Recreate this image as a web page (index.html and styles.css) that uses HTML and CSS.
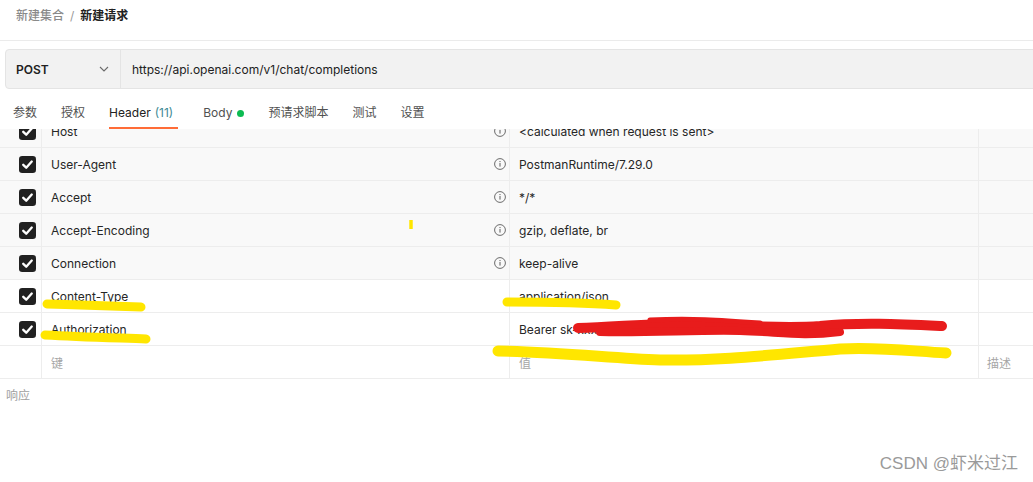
FILE: index.html
```html
<!DOCTYPE html>
<html lang="zh">
<head>
<meta charset="utf-8">
<title>新建请求</title>
<link rel="stylesheet" href="styles.css">
</head>
<body>
<div class="page">
  <header class="crumbs">
    <span class="crumb-parent">新建集合</span>
    <span class="crumb-sep">/</span>
    <span class="crumb-current">新建请求</span>
  </header>

  <div class="reqbar">
    <div class="method">
      <span class="method-name">POST</span>
      <svg class="chev" width="10" height="6" viewBox="0 0 10 6"><path d="M1 1 L5 5 L9 1" fill="none" stroke="#6b6b6b" stroke-width="1.1"/></svg>
    </div>
    <div class="url">https://api.openai.com/v1/chat/completions</div>
  </div>

  <nav class="tabs">
    <span class="tab">参数</span>
    <span class="tab">授权</span>
    <span class="tab active">Header <span class="count">(11)</span></span>
    <span class="tab body-tab">Body <span class="dot"></span></span>
    <span class="tab">预请求脚本</span>
    <span class="tab">测试</span>
    <span class="tab">设置</span>
  </nav>

  <div class="table-wrap">
    <div class="table">
      <div class="row auto">
        <div class="c-check"><svg class="cb" viewBox="0 0 16 16"><rect width="16" height="16" rx="3" fill="#212121"/><path d="M4 8.3 L6.8 11 L12 5.2" fill="none" stroke="#fff" stroke-width="2.2" stroke-linecap="round" stroke-linejoin="round"/></svg></div>
        <div class="c-key"><span>Host</span><svg class="info" viewBox="0 0 12 12"><circle cx="6" cy="6" r="5.4" fill="none" stroke="#6b6b6b" stroke-width="1"/><rect x="5.45" y="5" width="1.1" height="3.6" fill="#6b6b6b"/><rect x="5.45" y="3" width="1.1" height="1.1" fill="#6b6b6b"/></svg></div>
        <div class="c-val">&lt;calculated when request is sent&gt;</div>
        <div class="c-desc"></div>
      </div>
      <div class="row auto">
        <div class="c-check"><svg class="cb" viewBox="0 0 16 16"><rect width="16" height="16" rx="3" fill="#212121"/><path d="M4 8.3 L6.8 11 L12 5.2" fill="none" stroke="#fff" stroke-width="2.2" stroke-linecap="round" stroke-linejoin="round"/></svg></div>
        <div class="c-key"><span>User-Agent</span><svg class="info" viewBox="0 0 12 12"><circle cx="6" cy="6" r="5.4" fill="none" stroke="#6b6b6b" stroke-width="1"/><rect x="5.45" y="5" width="1.1" height="3.6" fill="#6b6b6b"/><rect x="5.45" y="3" width="1.1" height="1.1" fill="#6b6b6b"/></svg></div>
        <div class="c-val">PostmanRuntime/7.29.0</div>
        <div class="c-desc"></div>
      </div>
      <div class="row auto">
        <div class="c-check"><svg class="cb" viewBox="0 0 16 16"><rect width="16" height="16" rx="3" fill="#212121"/><path d="M4 8.3 L6.8 11 L12 5.2" fill="none" stroke="#fff" stroke-width="2.2" stroke-linecap="round" stroke-linejoin="round"/></svg></div>
        <div class="c-key"><span>Accept</span><svg class="info" viewBox="0 0 12 12"><circle cx="6" cy="6" r="5.4" fill="none" stroke="#6b6b6b" stroke-width="1"/><rect x="5.45" y="5" width="1.1" height="3.6" fill="#6b6b6b"/><rect x="5.45" y="3" width="1.1" height="1.1" fill="#6b6b6b"/></svg></div>
        <div class="c-val">*/*</div>
        <div class="c-desc"></div>
      </div>
      <div class="row auto">
        <div class="c-check"><svg class="cb" viewBox="0 0 16 16"><rect width="16" height="16" rx="3" fill="#212121"/><path d="M4 8.3 L6.8 11 L12 5.2" fill="none" stroke="#fff" stroke-width="2.2" stroke-linecap="round" stroke-linejoin="round"/></svg></div>
        <div class="c-key"><span>Accept-Encoding</span><svg class="info" viewBox="0 0 12 12"><circle cx="6" cy="6" r="5.4" fill="none" stroke="#6b6b6b" stroke-width="1"/><rect x="5.45" y="5" width="1.1" height="3.6" fill="#6b6b6b"/><rect x="5.45" y="3" width="1.1" height="1.1" fill="#6b6b6b"/></svg></div>
        <div class="c-val">gzip, deflate, br</div>
        <div class="c-desc"></div>
      </div>
      <div class="row auto">
        <div class="c-check"><svg class="cb" viewBox="0 0 16 16"><rect width="16" height="16" rx="3" fill="#212121"/><path d="M4 8.3 L6.8 11 L12 5.2" fill="none" stroke="#fff" stroke-width="2.2" stroke-linecap="round" stroke-linejoin="round"/></svg></div>
        <div class="c-key"><span>Connection</span><svg class="info" viewBox="0 0 12 12"><circle cx="6" cy="6" r="5.4" fill="none" stroke="#6b6b6b" stroke-width="1"/><rect x="5.45" y="5" width="1.1" height="3.6" fill="#6b6b6b"/><rect x="5.45" y="3" width="1.1" height="1.1" fill="#6b6b6b"/></svg></div>
        <div class="c-val">keep-alive</div>
        <div class="c-desc"></div>
      </div>
      <div class="row">
        <div class="c-check"><svg class="cb" viewBox="0 0 16 16"><rect width="16" height="16" rx="3" fill="#212121"/><path d="M4 8.3 L6.8 11 L12 5.2" fill="none" stroke="#fff" stroke-width="2.2" stroke-linecap="round" stroke-linejoin="round"/></svg></div>
        <div class="c-key"><span>Content-Type</span></div>
        <div class="c-val">application/json</div>
        <div class="c-desc"></div>
      </div>
      <div class="row">
        <div class="c-check"><svg class="cb" viewBox="0 0 16 16"><rect width="16" height="16" rx="3" fill="#212121"/><path d="M4 8.3 L6.8 11 L12 5.2" fill="none" stroke="#fff" stroke-width="2.2" stroke-linecap="round" stroke-linejoin="round"/></svg></div>
        <div class="c-key"><span>Authorization</span></div>
        <div class="c-val">Bearer sk-xxxxxxxxxxxxxxxxxxxxxxxxxxxxxxxxxxxx</div>
        <div class="c-desc"></div>
      </div>
      <div class="row placeholder">
        <div class="c-check"></div>
        <div class="c-key"><span>键</span></div>
        <div class="c-val">值</div>
        <div class="c-desc">描述</div>
      </div>
    </div>
  </div>

  <div class="response">响应</div>

  <svg class="marks" width="1033" height="482" viewBox="0 0 1033 482">
    <path d="M411 220 L411 229" stroke="#ffe600" stroke-width="3.5" fill="none"/>
    <path d="M47 304 C80 305 115 306 141 307" stroke="#ffe600" stroke-width="9" stroke-linecap="round" fill="none"/>
    <path d="M45 335 C80 337 120 338 146 339" stroke="#ffe600" stroke-width="9" stroke-linecap="round" fill="none"/>
    <path d="M507 302 C550 302 590 303 616 305" stroke="#ffe600" stroke-width="9" stroke-linecap="round" fill="none"/>
    <path d="M498 351 C560 352 610 358 660 360 C720 361 770 355 840 349 C880 347 910 351 946 353" stroke="#ffe600" stroke-width="11" stroke-linecap="round" fill="none"/>
    <path d="M578 328 C620 327 660 322 700 324 C740 325 780 329 820 326 C860 322 900 324 942 326" stroke="#e81c1c" stroke-width="10" stroke-linecap="round" fill="none"/>
    <path d="M600 332 C650 333 700 330 740 331 C780 332 800 337 840 332" stroke="#e81c1c" stroke-width="8" stroke-linecap="round" fill="none"/>
    <path d="M650 320 C690 318 720 320 760 323" stroke="#e81c1c" stroke-width="5" stroke-linecap="round" fill="none"/>
  </svg>

  <div class="watermark">CSDN @虾米过江</div>
</div>
</body>
</html>
```

FILE: styles.css
```css
* { box-sizing: border-box; }
html, body { margin: 0; padding: 0; background: #fff; }
body {
  font-family: Inter, "Noto Sans CJK SC", sans-serif;
  font-size: 12px;
  color: #212121;
  overflow: hidden;
}
.page {
  position: relative;
  width: 1033px;
  height: 482px;
  overflow: hidden;
}
.crumbs {
  height: 41px;
  padding: 8px 0 0 16px;
  line-height: 16px;
  border-bottom: 1px solid #ebebeb;
  display: flex;
  gap: 6px;
}
.crumb-parent { color: #8a8a8a; font-weight: 500; }
.crumb-sep { color: #9a9a9a; }
.crumb-current { color: #212121; font-weight: 600; }

.reqbar {
  margin: 8px -10px 0 5px;
  height: 40px;
  display: flex;
  background: #f2f2f2;
  border: 1px solid #e4e4e4;
  border-radius: 4px;
}
.method {
  width: 115px;
  flex: none;
  display: flex;
  align-items: center;
  justify-content: space-between;
  padding: 0 11px 0 10px;
  border-right: 1px solid #e4e4e4;
}
.method-name { font-weight: 600; font-size: 12px; color: #212121; }
.url {
  display: flex;
  align-items: center;
  padding-left: 11px;
  font-size: 12px;
  color: #212121;
}

.tabs {
  display: flex;
  gap: 24px;
  padding-left: 13px;
  height: 40px;
}
.tab {
  padding-top: 16px;
  line-height: 16px;
  color: #505050;
  border-bottom: 2px solid transparent;
  display: flex;
  align-items: flex-start;
  gap: 4px;
  white-space: nowrap;
}
.tab.active { color: #212121; border-bottom-color: #ff6c37; padding-right: 5px; }
.body-tab { margin-left: 1px; gap: 5px; }
.count { color: #3d8a94; }
.dot {
  width: 7px;
  height: 7px;
  border-radius: 50%;
  background: #0cbb52;
  margin-top: 5px;
}

.table-wrap {
  height: 250px;
  overflow: hidden;
}
.table { margin-top: -14px; }
.row {
  display: grid;
  grid-template-columns: 42px 468px 469px 1fr;
  height: 33px;
  border-bottom: 1px solid #ededed;
  background: #fff;
  color: #262626;
}
.row.auto { background: #f9f9f9; }
.row > div {
  display: flex;
  align-items: center;
  border-right: 1px solid #ededed;
}
.row > div:last-child { border-right: none; }
.c-check { padding-left: 19px; }
.cb { width: 17px; height: 17px; }
.c-key { justify-content: space-between; padding: 0 3px 0 9px; }
.info { width: 12px; height: 12px; }
.c-val { padding-left: 9px; white-space: nowrap; overflow: hidden; }
.c-desc { padding-left: 8px; }
.placeholder { color: #a6a6a6; }

.response {
  padding: 9px 0 0 6px;
  line-height: 16px;
  color: #a0a0a0;
}

.marks {
  position: absolute;
  left: 0;
  top: 0;
  pointer-events: none;
}
.watermark {
  position: absolute;
  right: 15px;
  top: 453px;
  font-family: "Liberation Sans", "Noto Sans CJK SC", sans-serif;
  font-size: 17px;
  line-height: 22px;
  color: #9a9a9a;
}
```
